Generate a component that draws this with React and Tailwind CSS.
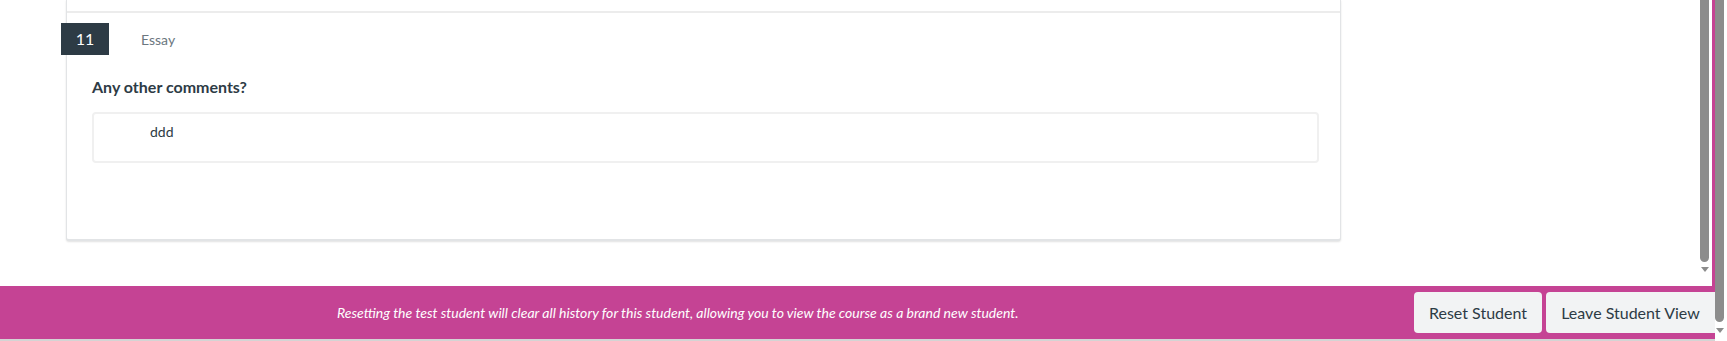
export default function App() {
  const font = { fontFamily: "Lato, 'Noto Sans', sans-serif" };

  return (
    <div className="flex h-[341px] w-[1727px] overflow-hidden bg-white" style={font}>
      {/* page + student view bar */}
      <div className="flex w-[1715px] flex-col">
        <div className="flex h-[286px]">
          {/* content */}
          <div className="flex-1 pl-[66px]">
            <div className="w-[1275px] rounded-b-[3px] border-x border-b-2 border-[#e2e4e6] bg-white shadow-[0_1px_2px_rgba(0,0,0,0.12)]">
              <div className="h-[13px] border-b-2 border-[#ececec]" />
              <div className="flex items-center pt-[10px]">
                <div className="-ml-[6px] flex h-[32px] w-[48px] items-center justify-center bg-[#2d3b45] text-[16px] text-white">
                  11
                </div>
                <span className="ml-[32px] text-[14px] text-[#6b7780]">Essay</span>
              </div>
              <div className="pb-[76px] pl-[25px] pr-[21px]">
                <h3 className="mt-[22px] text-[16px] font-bold leading-[20px] text-[#2d3b45]">
                  Any other comments?
                </h3>
                <div className="mt-[15px] h-[51px] rounded-[4px] border-2 border-[#f0f0f0] pl-[56px] pt-[9px] text-[14px] leading-[17px] text-[#2d3b45]">
                  ddd
                </div>
              </div>
            </div>
          </div>
          {/* inner scrollbar */}
          <div className="flex w-[9px] flex-col items-center">
            <div className="h-[262px] w-[9px] rounded-b-full bg-[#8c8c8c]" />
            <div className="mt-[5px] h-0 w-0 border-x-[4px] border-t-[5px] border-x-transparent border-t-[#8c8c8c]" />
          </div>
          <div className="w-[3px]" />
          <div className="w-[3px] bg-[#c54394]" />
        </div>
        <div className="flex h-[53px] items-center bg-[#c54394] pl-[337px]">
          <p className="flex-1 text-[14px] italic text-white">
            Resetting the test student will clear all history for this student, allowing you to view the course as a brand new student.
          </p>
          <div className="flex items-center gap-[4px] self-stretch pb-[6px] pt-[6px]">
            <button className="h-full w-[128px] rounded-[4px] bg-[#f2f3f4] text-[16px] text-[#2d3b45]">
              Reset Student
            </button>
            <button className="h-full w-[169px] rounded-l-[4px] bg-[#f2f3f4] text-[16px] text-[#2d3b45]">
              Leave Student View
            </button>
          </div>
        </div>
        <div className="h-[2px] bg-[#d4d4d4]" />
      </div>
      {/* outer scrollbar */}
      <div className="flex w-[12px] flex-col items-start">
        <div className="h-[322px] w-[9px] rounded-b-full bg-[#8c8c8c]" />
        <div className="ml-[1px] mt-[6px] h-0 w-0 border-x-[4px] border-t-[5px] border-x-transparent border-t-[#8c8c8c]" />
      </div>
    </div>
  );
}
